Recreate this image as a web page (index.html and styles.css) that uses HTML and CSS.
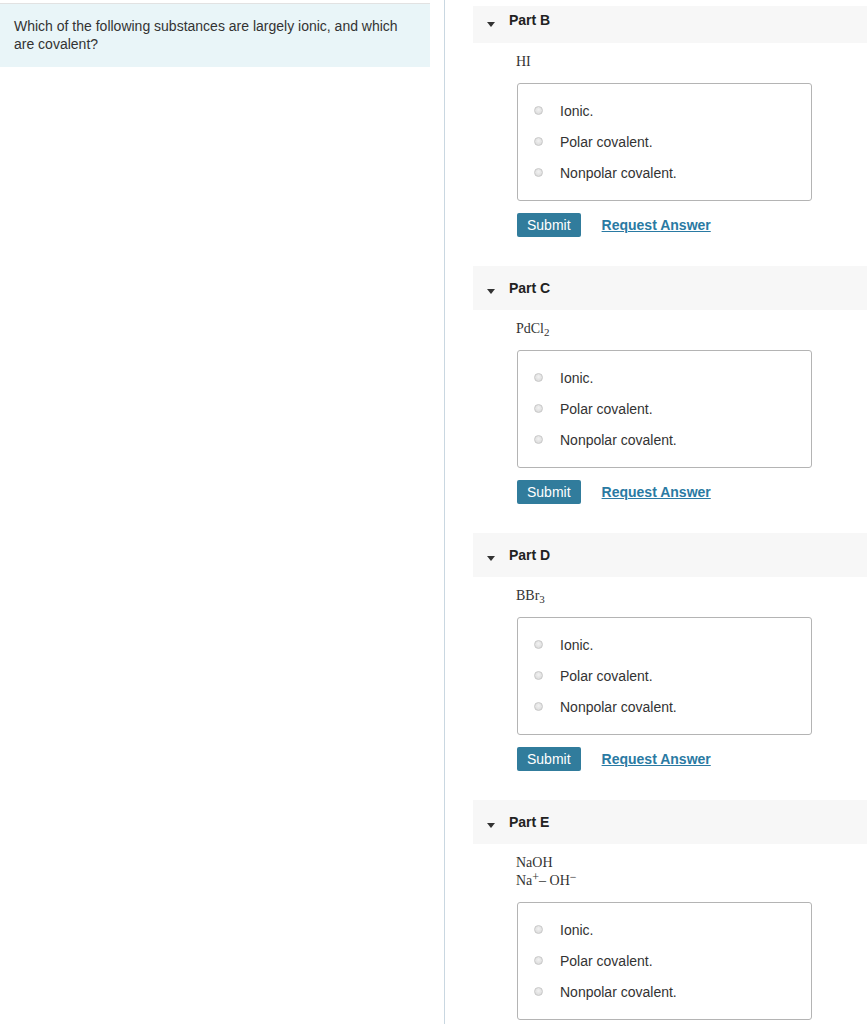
FILE: index.html
```html
<!DOCTYPE html>
<html>
<head>
<meta charset="utf-8">
<link rel="stylesheet" href="styles.css">
</head>
<body>
<div class="page">
  <div class="left">
    <div class="question">Which of the following substances are largely ionic, and which are covalent?</div>
  </div>
  <div class="right">
    <section class="part">
      <div class="part-head first"><span class="tri"></span><span class="part-title">Part B</span></div>
      <div class="formula">HI</div>
      <div class="choices">
        <div class="opt"><span class="radio"></span>Ionic.</div>
        <div class="opt"><span class="radio"></span>Polar covalent.</div>
        <div class="opt"><span class="radio"></span>Nonpolar covalent.</div>
      </div>
      <div class="actions"><button class="submit">Submit</button><a class="req" href="#">Request Answer</a></div>
    </section>
    <section class="part">
      <div class="part-head"><span class="tri"></span><span class="part-title">Part C</span></div>
      <div class="formula">PdCl<sub class="ov">2</sub></div>
      <div class="choices">
        <div class="opt"><span class="radio"></span>Ionic.</div>
        <div class="opt"><span class="radio"></span>Polar covalent.</div>
        <div class="opt"><span class="radio"></span>Nonpolar covalent.</div>
      </div>
      <div class="actions"><button class="submit">Submit</button><a class="req" href="#">Request Answer</a></div>
    </section>
    <section class="part">
      <div class="part-head"><span class="tri"></span><span class="part-title">Part D</span></div>
      <div class="formula">BBr<sub class="ov">3</sub></div>
      <div class="choices">
        <div class="opt"><span class="radio"></span>Ionic.</div>
        <div class="opt"><span class="radio"></span>Polar covalent.</div>
        <div class="opt"><span class="radio"></span>Nonpolar covalent.</div>
      </div>
      <div class="actions"><button class="submit">Submit</button><a class="req" href="#">Request Answer</a></div>
    </section>
    <section class="part">
      <div class="part-head"><span class="tri"></span><span class="part-title">Part E</span></div>
      <div class="formula">NaOH<br>Na<sup class="sp">+</sup>– OH<sup class="sp">−</sup></div>
      <div class="choices">
        <div class="opt"><span class="radio"></span>Ionic.</div>
        <div class="opt"><span class="radio"></span>Polar covalent.</div>
        <div class="opt"><span class="radio"></span>Nonpolar covalent.</div>
      </div>
    </section>
  </div>
</div>
</body>
</html>
```
FILE: styles.css
```css
html, body {
  margin: 0;
  padding: 0;
  background: #fff;
}
body {
  font-family: "Liberation Sans", Arial, sans-serif;
  font-size: 14px;
  color: #333;
}
.page {
  display: flex;
  align-items: stretch;
  min-height: 1024px;
}
.left {
  width: 444px;
  flex: none;
  padding-top: 3px;
}
.question {
  width: 430px;
  box-sizing: border-box;
  border-top: 1px solid #e2e2e2;
  background: #e9f5f8;
  padding: 13px 14px 14px 14px;
  line-height: 18px;
  color: #333;
}
.right {
  flex: 1;
  border-left: 1px solid #c9d7e1;
  padding-left: 28px;
}
.part-head {
  height: 44px;
  background: #f7f7f7;
  display: flex;
  align-items: center;
  padding-left: 14px;
  margin-top: 29px;
}
.part-head.first {
  height: 37px;
  margin-top: 6px;
  align-items: flex-start;
  padding-top: 6px;
  box-sizing: border-box;
}
.tri {
  width: 0;
  height: 0;
  border-left: 4px solid transparent;
  border-right: 4px solid transparent;
  border-top: 5px solid #333;
  margin-right: 14px;
  margin-top: 6px;
}
.part-head.first .tri {
  margin-top: 10px;
}
.part-title {
  font-weight: bold;
  font-size: 14px;
  color: #222;
  line-height: 16px;
}
.formula {
  font-family: "Liberation Serif", "Times New Roman", serif;
  font-size: 14px;
  line-height: 18px;
  color: #333;
  margin: 10px 0 0 43px;
}
.formula .ov {
  font-size: 11px;
  margin-left: 0;
  vertical-align: -3px;
  line-height: 0;
}
.formula .sp {
  font-size: 12px;
  vertical-align: 4px;
  line-height: 0;
}
.choices {
  margin: 12px 0 0 44px;
  width: 295px;
  box-sizing: border-box;
  border: 1px solid #b4b4b4;
  border-radius: 3px;
  padding: 11px 0 12px 16px;
}
.opt {
  height: 31px;
  display: flex;
  align-items: center;
  color: #333;
}
.radio {
  width: 7px;
  height: 7px;
  border-radius: 50%;
  border: 1px solid #c8c8c8;
  background: radial-gradient(circle at 50% 40%, #f2f2f2, #d6d6d6);
  margin-right: 17px;
  flex: none;
}
.actions {
  margin: 12px 0 0 44px;
  display: flex;
  align-items: center;
}
.submit {
  height: 24px;
  padding: 0 10px;
  border: none;
  border-radius: 2px;
  background: #317c9c;
  color: #fff;
  font-family: "Liberation Sans", Arial, sans-serif;
  font-size: 14px;
  line-height: 24px;
  cursor: pointer;
}
.req {
  margin-left: 21px;
  font-weight: bold;
  color: #2a7aa3;
  text-decoration: underline;
  font-size: 14px;
}
```
